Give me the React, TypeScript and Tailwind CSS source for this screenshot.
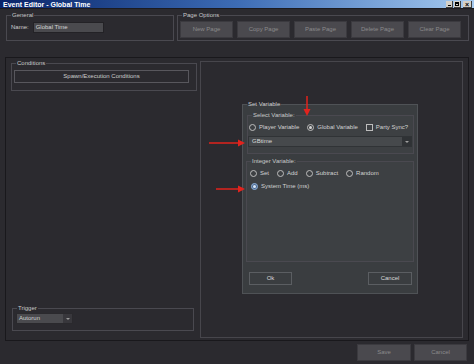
import React from 'react';

const font = { fontFamily: '"Liberation Sans", Arial, sans-serif' };

const GroupBox: React.FC<{ label: string; className?: string; children?: React.ReactNode }> = ({ label, className = '', children }) => (
  <fieldset className={`border border-[#4a4950] min-w-0 ${className}`}>
    <legend className="ml-[4px] px-[1px] text-[6px] leading-[7px] text-[#c9c9c9]">{label}</legend>
    {children}
  </fieldset>
);

const Radio: React.FC<{ label: string; checked?: boolean; focus?: boolean }> = ({ label, checked, focus }) => (
  <div className="flex items-center gap-[3px]">
    <span
      className={`w-[7px] h-[7px] rounded-full border flex items-center justify-center ${
        focus ? 'border-[#8fb0d8] bg-[#4d6a92]' : 'border-[#bdbdbd]'
      }`}
    >
      {checked && <span className={`w-[3px] h-[3px] rounded-full ${focus ? 'bg-[#dbe8f7]' : 'bg-[#d6d6d6]'}`} />}
    </span>
    <span className="text-[6px] leading-[8px] text-[#d2d2d2]">{label}</span>
  </div>
);

const GreyButton: React.FC<{ label: string; className?: string }> = ({ label, className = '' }) => (
  <div className={`bg-[#4a494e] border border-[#3b3a3f] flex items-center justify-center text-[6px] text-[#8a8a8c] ${className}`}>
    {label}
  </div>
);

const Arrows = () => (
  <svg className="absolute inset-0 pointer-events-none" width={474} height={364}>
    <g stroke="#e2231d" strokeWidth={1.5} fill="#e2231d">
      <line x1={307} y1={96} x2={307} y2={110} />
      <polygon points="303.5,109 310.5,109 307,116" stroke="none" />
      <line x1={209} y1={143} x2={239} y2={143} />
      <polygon points="238,139.5 238,146.5 245,143" stroke="none" />
      <line x1={216} y1={189} x2={239} y2={189} />
      <polygon points="238,185.5 238,192.5 245,189" stroke="none" />
    </g>
  </svg>
);

export default function App() {
  return (
    <div className="w-[474px] h-[364px] bg-[#2b2a2f] flex flex-col relative overflow-hidden select-none" style={font}>
      {/* title bar */}
      <div className="h-[8px] shrink-0 flex items-end justify-between bg-linear-to-r from-[#0a246a] via-[#3d6cb5] to-[#a6caf0] overflow-hidden">
        <span className="pl-[3px] text-[7px] leading-[8px] font-bold text-white translate-y-[1px]">Event Editor - Global Time</span>
        <div className="flex items-end gap-[1px] pr-[2px] h-full">
          <div className="w-[7px] h-[7px] bg-[#d4d0c8] border-b border-r border-[#404040] flex items-end justify-center">
            <span className="w-[3px] h-[1px] bg-black mb-[1px]" />
          </div>
          <div className="w-[7px] h-[7px] bg-[#d4d0c8] border-b border-r border-[#404040] flex items-center justify-center">
            <span className="w-[4px] h-[4px] border border-black border-t-2" />
          </div>
          <div className="w-[9px] h-[7px] ml-[1px] bg-[#d4d0c8] border-b border-r border-[#404040] flex items-center justify-center text-[7px] leading-[7px] font-bold text-black">
            ×
          </div>
        </div>
      </div>
      <div className="h-[1px] bg-[#1c1b20] shrink-0" />

      {/* top options */}
      <div className="h-[48px] shrink-0 flex gap-[3px] pl-[6px] pt-[3px]">
        <GroupBox label="General" className="w-[168px] h-[29px]">
          <div className="flex items-center gap-[4px] pl-[4px] pt-[3px]">
            <span className="text-[6px] text-[#cfcfcf]">Name:</span>
            <div className="w-[71px] h-[11px] bg-[#4a4a4e] border border-[#232226] flex items-center pl-[2px] text-[6px] text-[#d6d6d6]">
              Global Time
            </div>
          </div>
        </GroupBox>
        <GroupBox label="Page Options" className="w-[292px] h-[29px]">
          <div className="flex gap-[4px] pl-[2px] pt-[2px]">
            <GreyButton label="New Page" className="w-[53px] h-[17px]" />
            <GreyButton label="Copy Page" className="w-[53px] h-[17px]" />
            <GreyButton label="Paste Page" className="w-[53px] h-[17px]" />
            <GreyButton label="Delete Page" className="w-[53px] h-[17px]" />
            <GreyButton label="Clear Page" className="w-[53px] h-[17px]" />
          </div>
        </GroupBox>
      </div>

      {/* main panel */}
      <div className="ml-[5px] w-[464px] h-[284px] shrink-0 border border-[#19181c] flex">
        {/* left column */}
        <div className="w-[194px] flex flex-col justify-between">
          <GroupBox label="Conditions" className="ml-[5px] mt-[2px] w-[186px] h-[31px]">
            <div className="pl-[2px] pt-[3px]">
              <div className="w-[175px] h-[13px] border border-[#58575d] flex items-center justify-center text-[6px] text-[#cdcdcd]">
                Spawn/Execution Conditions
              </div>
            </div>
          </GroupBox>
          <GroupBox label="Trigger" className="ml-[6px] mb-[9px] w-[182px] h-[26px]">
            <div className="pl-[3px] pt-[1px]">
              <div className="w-[57px] h-[11px] bg-[#4a4a4e] border border-[#2a292d] flex items-center justify-between text-[6px] text-[#d0d0d0]">
                <span className="pl-[2px]">Autorun</span>
                <span className="w-[9px] h-full bg-[#38373c] flex items-center justify-center">
                  <span className="w-0 h-0 border-l-[2px] border-r-[2px] border-t-[2px] border-l-transparent border-r-transparent border-t-[#9a9a9a]" />
                </span>
              </div>
            </div>
          </GroupBox>
        </div>

        {/* right pane */}
        <div className="relative mt-[3px] w-[263px] h-[277px] border border-[#47464c]">
          <fieldset className="absolute left-[41px] top-[39px] w-[176px] h-[193px] min-w-0 border border-[#4f5256] bg-[#3a3d40] flex flex-col">
            <legend className="ml-[4px] px-[1px] text-[6px] leading-[7px] text-[#d0d0d0]">Set Variable</legend>
            <div className="pl-[4px] pr-[2px]">
              <GroupBox label="Select Variable:" className="mt-[4px] w-[167px] h-[42px] bg-[#3d4043]">
                <div className="flex items-center gap-[8px] pl-[1px] pt-[4px]">
                  <Radio label="Player Variable" />
                  <Radio label="Global Variable" checked />
                  <div className="flex items-center gap-[3px]">
                    <span className="w-[7px] h-[7px] border border-[#bdbdbd]" />
                    <span className="text-[6px] leading-[8px] text-[#d2d2d2]">Party Sync?</span>
                  </div>
                </div>
                <div className="mt-[5px] w-[164px] h-[11px] bg-[#46494c] border border-[#303336] flex items-center justify-between text-[6px] text-[#dadada]">
                  <span className="pl-[3px]">GBtime</span>
                  <span className="w-[9px] h-full bg-[#2f3235] flex items-center justify-center">
                    <span className="w-0 h-0 border-l-[2px] border-r-[2px] border-t-[2px] border-l-transparent border-r-transparent border-t-[#a0a0a0]" />
                  </span>
                </div>
              </GroupBox>
              <GroupBox label="Integer Variable:" className="mt-[4px] w-[168px] h-[104px] -ml-[1px] bg-[#3d4043]">
                <div className="flex items-center gap-[8px] pl-[3px] pt-[4px]">
                  <Radio label="Set" />
                  <Radio label="Add" />
                  <Radio label="Subtract" />
                  <Radio label="Random" />
                </div>
                <div className="pl-[4px] mt-[5px]">
                  <Radio label="System Time (ms)" checked focus />
                </div>
              </GroupBox>
              <div className="mt-[10px] flex justify-between pl-[2px] pr-[3px]">
                <div className="w-[43px] h-[13px] border border-[#5b5e62] flex items-center justify-center text-[6px] text-[#d8d8d8]">Ok</div>
                <div className="w-[44px] h-[13px] border border-[#5b5e62] flex items-center justify-center text-[6px] text-[#d8d8d8]">Cancel</div>
              </div>
            </div>
          </fieldset>
        </div>
      </div>

      {/* footer */}
      <div className="flex justify-end gap-[3px] pr-[7px] pt-[3px]">
        <GreyButton label="Save" className="w-[54px] h-[17px]" />
        <GreyButton label="Cancel" className="w-[53px] h-[17px]" />
      </div>

      <Arrows />
    </div>
  );
}
